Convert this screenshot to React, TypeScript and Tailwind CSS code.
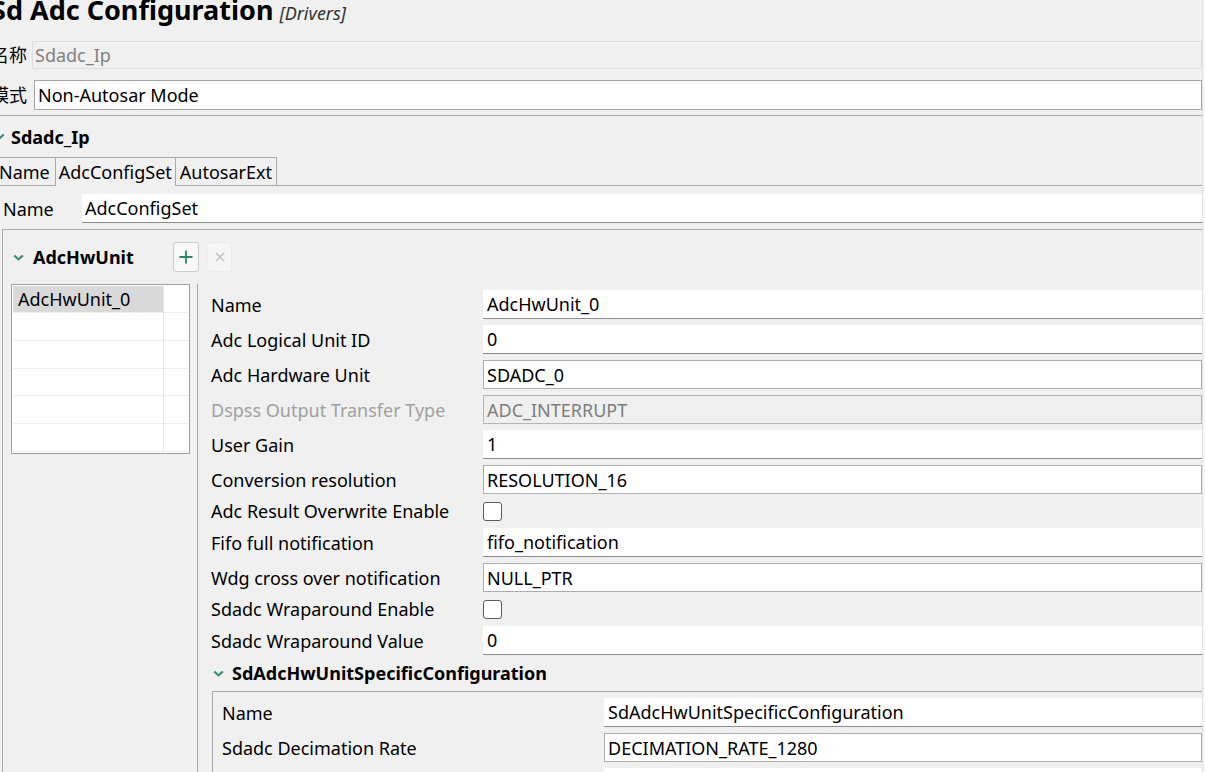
import React from 'react';

type Kind = 'text' | 'combo' | 'disabled' | 'check';

interface Prop {
  label: string;
  kind: Kind;
  value?: string;
}

const hwProps: Prop[] = [
  { label: 'Name', kind: 'text', value: 'AdcHwUnit_0' },
  { label: 'Adc Logical Unit ID', kind: 'text', value: '0' },
  { label: 'Adc Hardware Unit', kind: 'combo', value: 'SDADC_0' },
  { label: 'Dspss Output Transfer Type', kind: 'disabled', value: 'ADC_INTERRUPT' },
  { label: 'User Gain', kind: 'text', value: '1' },
  { label: 'Conversion resolution', kind: 'combo', value: 'RESOLUTION_16' },
  { label: 'Adc Result Overwrite Enable', kind: 'check' },
  { label: 'Fifo full notification', kind: 'text', value: 'fifo_notification' },
  { label: 'Wdg cross over notification', kind: 'combo', value: 'NULL_PTR' },
  { label: 'Sdadc Wraparound Enable', kind: 'check' },
  { label: 'Sdadc Wraparound Value', kind: 'text', value: '0' },
];

const specificProps: Prop[] = [
  { label: 'Name', kind: 'text', value: 'SdAdcHwUnitSpecificConfiguration' },
  { label: 'Sdadc Decimation Rate', kind: 'combo', value: 'DECIMATION_RATE_1280' },
  { label: 'Sdadc Clock Divider', kind: 'text', value: '' },
];

const Chevron = () => (
  <svg width="11" height="7" viewBox="0 0 11 7" className="shrink-0">
    <polyline points="1.2,1.4 5.5,5.4 9.8,1.4" fill="none" stroke="#2e8c76" strokeWidth="2.1" />
  </svg>
);

const Field: React.FC<{ p: Prop }> = ({ p }) => {
  if (p.kind === 'check') {
    return (
      <div className="h-[22px] flex-1 flex items-center">
        <div className="w-[19px] h-[19px] rounded-[3px] border border-[#5c5c5c] bg-white" />
      </div>
    );
  }
  if (p.kind === 'text') {
    return (
      <div className="h-[29px] flex-1 bg-white border-b border-[#8a8a8a] flex items-center pl-[4px] whitespace-nowrap">
        {p.value}
      </div>
    );
  }
  return (
    <div
      className={
        p.kind === 'disabled'
          ? 'h-[29px] flex-1 bg-[#efefef] border border-[#b4b4b4] flex items-center pl-[3px] text-[#7d7d7d] whitespace-nowrap'
          : 'h-[29px] flex-1 bg-white border border-[#adadad] flex items-center pl-[3px] whitespace-nowrap'
      }
    >
      {p.value}
    </div>
  );
};

const PropRow: React.FC<{ p: Prop; labelW: string }> = ({ p, labelW }) => (
  <div className="flex items-center">
    <div className={`${labelW} shrink-0 whitespace-nowrap leading-[22px] ${p.kind === 'disabled' ? 'text-[#a0a0a0]' : ''}`}>
      {p.label}
    </div>
    <Field p={p} />
  </div>
);

export default function App() {
  return (
    <div className="w-[1205px] h-[772px] overflow-hidden bg-[#f0f0f0] flex text-[18px] leading-[24px] text-black font-['Noto_Sans','Noto_Sans_CJK_SC',sans-serif]">
      <div className="w-[1212px] -ml-[10px] flex flex-col shrink-0">
        {/* form header */}
        <div className="h-[30px] -mt-[5px] leading-[30px] pl-[1px] whitespace-nowrap flex items-baseline">
          <span className="text-[27px] font-bold">Sd Adc Configuration</span>
          <span className="ml-[6px] text-[18px] italic text-[#333]">[Drivers]</span>
        </div>

        <div className="mt-[16px] flex items-center pl-[1px]">
          <div className="w-[41px] shrink-0 leading-[22px]">名称</div>
          <div className="h-[28px] flex-1 border border-[#dedede] flex items-center pl-[2px] text-[#808080]">
            Sdadc_Ip
          </div>
        </div>

        <div className="mt-[11px] flex items-center pl-[1px]">
          <div className="w-[43px] shrink-0 leading-[22px]">模式</div>
          <div className="h-[30px] flex-1 bg-white border border-[#a6a6a6] flex items-center pl-[3px]">
            Non-Autosar Mode
          </div>
        </div>

        {/* Sdadc_Ip section */}
        <div className="mt-[5px] border-t border-[#ababab] flex flex-col">
          <div className="h-[41px] flex items-center pl-[4px] gap-[6px]">
            <Chevron />
            <span className="font-bold">Sdadc_Ip</span>
          </div>

          <div className="h-[29px] flex items-stretch border-b border-[#a9a9a9]">
            <div className="w-[3px] shrink-0" />
            <div className="border-t border-l border-r border-[#a9a9a9] px-[5px] flex items-center">Name</div>
            <div className="border-t border-r border-[#a9a9a9] px-[3px] flex items-center -mb-px bg-[#f0f0f0]">
              AdcConfigSet
            </div>
            <div className="border-t border-r border-[#a9a9a9] px-[4px] flex items-center">AutosarExt</div>
          </div>

          <div className="mt-[8px] flex items-center pl-[13px]">
            <div className="w-[79px] shrink-0 leading-[22px]">Name</div>
            <div className="h-[29px] flex-1 bg-white border-b border-[#8a8a8a] flex items-center pl-[3px]">
              AdcConfigSet
            </div>
          </div>

          {/* config set panel */}
          <div className="mt-[6px] ml-[12px] border-t border-l border-[#ababab] flex flex-col h-[600px]">
            <div className="pt-[12px] flex items-center pl-[10px]">
              <Chevron />
              <span className="ml-[9px] w-[140px] font-bold">AdcHwUnit</span>
              <div className="w-[26px] h-[30px] rounded-[3px] border border-[#cdcdcd] bg-[#f8f8f8] flex items-center justify-center">
                <svg width="16" height="16" viewBox="0 0 16 16">
                  <path d="M8 1.5v13M1.5 8h13" stroke="#258a6d" strokeWidth="1.8" />
                </svg>
              </div>
              <div className="ml-[8px] w-[25px] h-[30px] rounded-[3px] border border-[#ececec] bg-[#f5f5f5] flex items-center justify-center">
                <svg width="12" height="12" viewBox="0 0 12 12">
                  <path d="M2 2l8 8M10 2l-8 8" stroke="#c4c4c4" strokeWidth="1.6" />
                </svg>
              </div>
            </div>

            <div className="mt-[12px] flex flex-1">
              {/* unit list */}
              <div className="ml-[8px] w-[179px] h-[170px] shrink-0 border border-[#a0a0a0] bg-white p-px flex">
                <div className="w-[150px] flex flex-col">
                  <div className="h-[27px] bg-[#d9d9d9] flex items-center pl-[5px] border-b border-[#ececec]">
                    AdcHwUnit_0
                  </div>
                  {[0, 1, 2, 3, 4].map((i) => (
                    <div key={i} className="h-[28px] border-b border-[#ececec]" />
                  ))}
                </div>
                <div className="flex-1 border-l border-[#e4e8f0] flex flex-col">
                  <div className="h-[27px] border-b border-[#ececec]" />
                  {[0, 1, 2, 3, 4].map((i) => (
                    <div key={i} className="h-[28px] border-b border-[#ececec]" />
                  ))}
                </div>
              </div>

              {/* properties */}
              <div className="ml-[7px] flex-1 border-l border-[#a6a6a6] pl-[13px] pt-[6px] flex flex-col">
                <div className="flex flex-col gap-[6px]">
                  {hwProps.map((p) => (
                    <PropRow key={p.label} p={p} labelW="w-[272px]" />
                  ))}
                </div>

                <div className="h-[36px] flex items-center pl-[2px] gap-[8px]">
                  <Chevron />
                  <span className="font-bold">SdAdcHwUnitSpecificConfiguration</span>
                </div>

                <div className="ml-px border-t border-l border-[#a6a6a6] pl-[9px] pt-[6px] flex flex-col gap-[6px]">
                  {specificProps.map((p) => (
                    <PropRow key={p.label} p={p} labelW="w-[382px]" />
                  ))}
                </div>
              </div>
            </div>
          </div>
        </div>
      </div>
      <div className="w-[3px] shrink-0 bg-[#f7f7f7] border-l border-[#e2e2e2]" />
    </div>
  );
}
